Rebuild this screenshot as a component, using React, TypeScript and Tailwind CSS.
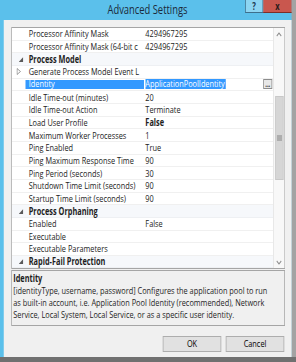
import React from 'react';

type Row =
  | { kind: 'cat'; label: string }
  | { kind: 'prop'; label: string; value?: string; bold?: boolean; selected?: boolean; expander?: boolean };

const rows: Row[] = [
  { kind: 'prop', label: 'Processor Affinity Mask', value: '4294967295' },
  { kind: 'prop', label: 'Processor Affinity Mask (64-bit c', value: '4294967295' },
  { kind: 'cat', label: 'Process Model' },
  { kind: 'prop', label: 'Generate Process Model Event L', expander: true },
  { kind: 'prop', label: 'Identity', value: 'ApplicationPoolIdentity', selected: true },
  { kind: 'prop', label: 'Idle Time-out (minutes)', value: '20' },
  { kind: 'prop', label: 'Idle Time-out Action', value: 'Terminate' },
  { kind: 'prop', label: 'Load User Profile', value: 'False', bold: true },
  { kind: 'prop', label: 'Maximum Worker Processes', value: '1' },
  { kind: 'prop', label: 'Ping Enabled', value: 'True' },
  { kind: 'prop', label: 'Ping Maximum Response Time', value: '90' },
  { kind: 'prop', label: 'Ping Period (seconds)', value: '30' },
  { kind: 'prop', label: 'Shutdown Time Limit (seconds)', value: '90' },
  { kind: 'prop', label: 'Startup Time Limit (seconds)', value: '90' },
  { kind: 'cat', label: 'Process Orphaning' },
  { kind: 'prop', label: 'Enabled', value: 'False' },
  { kind: 'prop', label: 'Executable', value: '' },
  { kind: 'prop', label: 'Executable Parameters', value: '' },
  { kind: 'cat', label: 'Rapid-Fail Protection' },
];

function Expanded() {
  return (
    <svg width="6" height="5" viewBox="0 0 6 5" className="block">
      <polygon points="6,0 6,5 0,5" fill="#5a5a5a" />
    </svg>
  );
}

function Collapsed() {
  return (
    <svg width="6" height="7" viewBox="0 0 6 7" className="block">
      <polygon points="0.7,0.5 5.3,3.5 0.7,6.5" fill="none" stroke="#808080" strokeWidth="0.9" />
    </svg>
  );
}

function GridRow({ row }: { row: Row }) {
  if (row.kind === 'cat') {
    return (
      <div className="flex h-[12.67px] items-center bg-[#f6f8fb] border-b border-[#eef0f3]">
        <div className="w-[18.67px] h-full flex items-center pl-[9.33px]">
          <Expanded />
        </div>
        <div className="pl-[4px] font-bold text-[#1e1e1e] whitespace-nowrap leading-[11px]">{row.label}</div>
      </div>
    );
  }
  return (
    <div className="flex h-[12.67px] items-stretch border-b border-[#f0f0f0]">
      <div className="w-[18.67px] flex items-center pl-[6px]">{row.expander ? <Collapsed /> : null}</div>
      <div
        className={
          row.selected
            ? 'w-[158px] my-[1px] bg-[#3399ff] text-white pl-[4px] flex items-center whitespace-nowrap leading-[10px]'
            : 'w-[158px] pl-[4px] flex items-center overflow-hidden whitespace-nowrap text-[#222] leading-[11px]'
        }
      >
        {row.label}
      </div>
      <div className="flex-1 flex items-center pl-[1.5px] overflow-hidden whitespace-nowrap leading-[11px]">
        {row.selected ? (
          <>
            <span className="bg-[#3399ff] text-white h-[10px] leading-[10px] pr-[1px]">{row.value}</span>
            <div className="flex-1" />
            <div className="w-[12px] h-[10px] mr-[1.33px] border-[1.33px] border-y border-[#8c8c8c] bg-[#e8e8e8] flex items-end justify-center">
              <span className="text-[8px] leading-[8px] font-bold text-[#333]">...</span>
            </div>
          </>
        ) : (
          <span className={row.bold ? 'font-bold text-[#1e1e1e]' : 'text-[#222]'}>{row.value}</span>
        )}
      </div>
    </div>
  );
}

function Scrollbar() {
  return (
    <div className="w-[14.67px] border-l-[1.33px] border-[#e3e3e3] bg-[#f8f8f8] flex flex-col items-center">
      <div className="h-[12.67px] flex items-center justify-center">
        <svg width="8" height="5" viewBox="0 0 8 5">
          <polyline points="1,4 4,1 7,4" fill="none" stroke="#8a8a8a" strokeWidth="1.1" />
        </svg>
      </div>
      <div className="h-[55px]" />
      <div className="h-[84px] w-[11px] bg-[#d6d6d6] border-[1.33px] border-y border-[#c8c8c8] flex items-center justify-center">
        <svg width="7" height="6" viewBox="0 0 7 6">
          <line x1="0" y1="1" x2="7" y2="1" stroke="#7a7a7a" strokeWidth="1" />
          <line x1="0" y1="3" x2="7" y2="3" stroke="#7a7a7a" strokeWidth="1" />
          <line x1="0" y1="5" x2="7" y2="5" stroke="#7a7a7a" strokeWidth="1" />
        </svg>
      </div>
      <div className="flex-1" />
      <div className="h-[12.67px] flex items-center justify-center">
        <svg width="8" height="5" viewBox="0 0 8 5">
          <polyline points="1,1 4,4 7,1" fill="none" stroke="#8a8a8a" strokeWidth="1.1" />
        </svg>
      </div>
    </div>
  );
}

export default function App() {
  return (
    <div className="w-[296px] h-[362px] overflow-hidden bg-[#a3a3a3]">
      <div
        className="w-[394.67px] h-[362px] origin-top-left scale-x-[0.75] flex flex-col text-[9.8px] leading-[12px]"
        style={{ fontFamily: '"Open Sans", "Noto Sans", sans-serif' }}
      >
        <div className="flex flex-1">
          <div className="w-[389.33px] flex flex-col bg-[#5bc0eb]">
            {/* Title bar */}
            <div className="h-[20px] flex items-start">
              <div className="w-[62.33px]" />
              <div className="flex-1 h-full flex items-center justify-center text-[12.5px] text-[#1b2a3a] pl-[4px]">
                Advanced Settings
              </div>
              <div className="w-[23.67px] h-[13px] bg-[#8dd5f2] border-x-[1.33px] border-b border-[#3d6f8c] flex items-center justify-center">
                <span className="text-[10px] leading-[10px] font-bold text-[#1c3550]">?</span>
              </div>
              <div className="w-[38.67px] h-[13px] bg-[#c9574e] border-b border-[#7d2e28] flex items-center justify-center">
                <span className="text-[10px] leading-[10px] font-bold text-[#2a1a1a]">x</span>
              </div>
            </div>
            {/* Client area */}
            <div className="flex-1 ml-[5.33px] bg-[#f0f0f0] flex flex-col px-[9.33px] pt-[7px]">
              <div className="bg-white border-y border-x-[1.33px] border-[#a5a5a5] flex">
                <div className="flex-1 flex flex-col">
                  {rows.map((r, i) => (
                    <GridRow key={i} row={r} />
                  ))}
                </div>
                <Scrollbar />
              </div>
              <div className="mt-[1px] h-[56px] border-y border-x-[1.33px] border-[#a5a5a5] bg-[#f0f0f0] pl-[2px] pt-[2px] leading-[12px] text-[9.8px] text-[#1e1e1e] whitespace-nowrap">
                <div className="font-bold">Identity</div>
                <div>[identityType, username, password] Configures the application pool to run</div>
                <div>as built-in account, i.e. Application Pool Identity (recommended), Network</div>
                <div>Service, Local System, Local Service, or as a specific user identity.</div>
              </div>
              <div className="mt-[10px] flex justify-end gap-[6.67px] pr-[1.33px]">
                <div className="w-[77.33px] h-[16px] border-y border-x-[1.33px] border-[#adadad] bg-[#e1e1e1] flex items-center justify-center text-black">
                  OK
                </div>
                <div className="w-[77.33px] h-[16px] border-y border-x-[1.33px] border-[#adadad] bg-[#e1e1e1] flex items-center justify-center text-black">
                  Cancel
                </div>
              </div>
            </div>
          </div>
          <div className="flex-1 bg-[#a3a3a3]" />
        </div>
        <div className="h-[5px] bg-[#707070]" />
      </div>
    </div>
  );
}
